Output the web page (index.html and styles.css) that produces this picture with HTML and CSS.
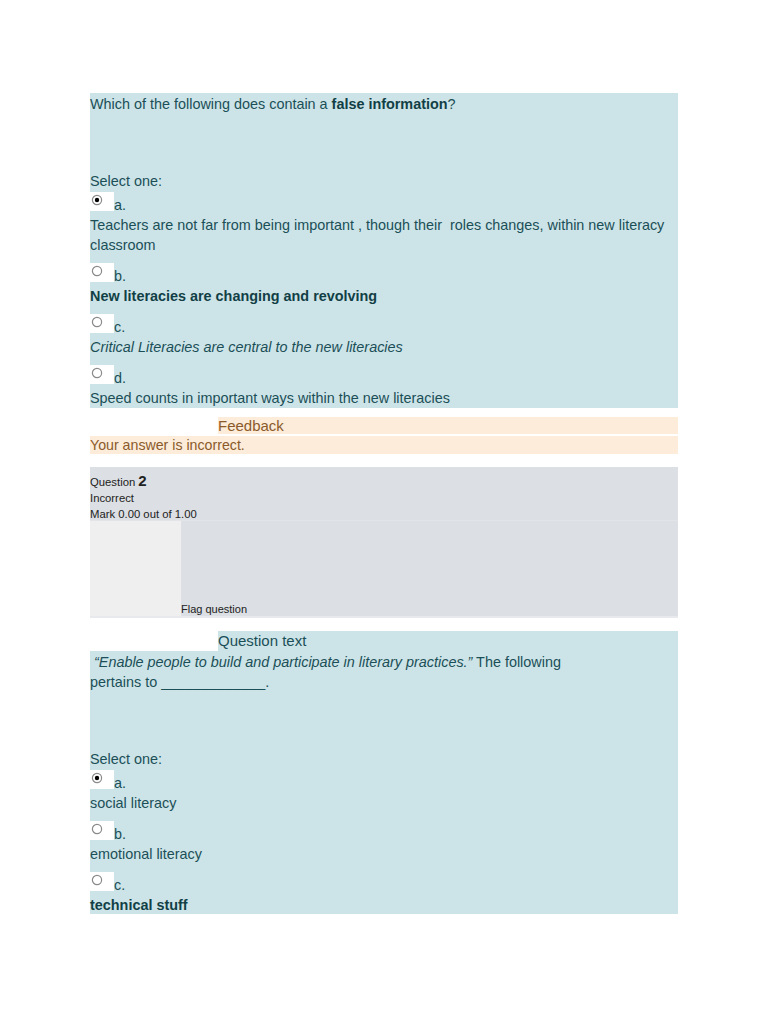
FILE: index.html
```html
<!DOCTYPE html>
<html>
<head>
<meta charset="utf-8">
<link rel="stylesheet" href="styles.css">
</head>
<body>
<div class="page">
  <section class="qbox">
    <div class="qtext">Which of the following does contain a <b>false information</b>?</div>
    <div class="select">Select one:</div>
    <div class="opt">
      <div class="radio-row"><span class="rb"><svg width="12" height="12" viewBox="0 0 12 12"><circle cx="6" cy="6" r="4.6" fill="#fff" stroke="#8a8a8a" stroke-width="1.2"/><circle cx="6" cy="6" r="2.2" fill="#000"/></svg></span><span class="lbl">a.</span></div>
      <div class="ans">Teachers are not far from being important , though their &nbsp;roles changes, within new literacy classroom</div>
    </div>
    <div class="opt">
      <div class="radio-row"><span class="rb"><svg width="12" height="12" viewBox="0 0 12 12"><circle cx="6" cy="6" r="4.6" fill="#fff" stroke="#8a8a8a" stroke-width="1.2"/></svg></span><span class="lbl">b.</span></div>
      <div class="ans bold">New literacies are changing and revolving</div>
    </div>
    <div class="opt">
      <div class="radio-row"><span class="rb"><svg width="12" height="12" viewBox="0 0 12 12"><circle cx="6" cy="6" r="4.6" fill="#fff" stroke="#8a8a8a" stroke-width="1.2"/></svg></span><span class="lbl">c.</span></div>
      <div class="ans ital">Critical Literacies are central to the new literacies</div>
    </div>
    <div class="opt">
      <div class="radio-row"><span class="rb"><svg width="12" height="12" viewBox="0 0 12 12"><circle cx="6" cy="6" r="4.6" fill="#fff" stroke="#8a8a8a" stroke-width="1.2"/></svg></span><span class="lbl">d.</span></div>
      <div class="ans">Speed counts in important ways within the new literacies</div>
    </div>
  </section>

  <div class="fb-head">Feedback</div>
  <div class="fb-text">Your answer is incorrect.</div>

  <section class="info">
    <div class="info-head">
      <div class="qnum">Question <b>2</b></div>
      <div class="line">Incorrect</div>
      <div class="line">Mark 0.00 out of 1.00</div>
    </div>
    <div class="info-body">
      <div class="flag-box"></div>
      <div class="flag-text">Flag question</div>
    </div>
  </section>

  <div class="qt-head">Question text</div>
  <section class="qbox2">
    <div class="qtext2">&nbsp;<i>“Enable people to build and participate in literary practices.”</i> The following<br>pertains to _____________.</div>
    <div class="select">Select one:</div>
    <div class="opt">
      <div class="radio-row"><span class="rb"><svg width="12" height="12" viewBox="0 0 12 12"><circle cx="6" cy="6" r="4.6" fill="#fff" stroke="#8a8a8a" stroke-width="1.2"/><circle cx="6" cy="6" r="2.2" fill="#000"/></svg></span><span class="lbl">a.</span></div>
      <div class="ans">social literacy</div>
    </div>
    <div class="opt">
      <div class="radio-row"><span class="rb"><svg width="12" height="12" viewBox="0 0 12 12"><circle cx="6" cy="6" r="4.6" fill="#fff" stroke="#8a8a8a" stroke-width="1.2"/></svg></span><span class="lbl">b.</span></div>
      <div class="ans">emotional literacy</div>
    </div>
    <div class="opt">
      <div class="radio-row"><span class="rb"><svg width="12" height="12" viewBox="0 0 12 12"><circle cx="6" cy="6" r="4.6" fill="#fff" stroke="#8a8a8a" stroke-width="1.2"/></svg></span><span class="lbl">c.</span></div>
      <div class="ans bold">technical stuff</div>
    </div>
  </section>
</div>
</body>
</html>
```

FILE: styles.css
```css
html, body {
  margin: 0;
  padding: 0;
  background: #ffffff;
}
body {
  font-family: "Liberation Sans", Arial, sans-serif;
  font-size: 14.4px;
  color: #1b4f57;
}
.page {
  width: 588px;
  margin-left: 90px;
  padding-top: 93px;
}
.qbox, .qbox2 {
  background: #cce4e8;
  line-height: 20px;
}
.qtext b { color: #123f46; }
.qtext {
  height: 78px;
  padding-top: 1px;
  box-sizing: border-box;
}
.qtext2 {
  height: 98px;
  padding-top: 1px;
  box-sizing: border-box;
}
.select {
  height: 20px;
  margin-bottom: 1px;
}
.opt {
  margin-bottom: 9px;
}
.opt:last-child {
  margin-bottom: 0;
}
.radio-row {
  height: 20px;
  display: flex;
  align-items: flex-end;
  margin-bottom: 2px;
}
.rb {
  display: flex;
  align-items: flex-start;
  justify-content: flex-start;
  width: 24px;
  height: 19px;
  align-self: flex-start;
  background: #ffffff;
  padding: 2px 0 0 1px;
  box-sizing: border-box;
}
.lbl {
  line-height: 14px;
}
.ans {
  padding-top: 1px;
  margin-bottom: -1px;
}
.ans.bold {
  font-weight: bold;
  color: #123f46;
}
.ans.ital {
  font-style: italic;
}
.fb-head {
  margin-top: 10px;
  margin-left: 128px;
  height: 17px;
  line-height: 17px;
  background: #fcecd9;
  color: #8b5a2b;
  font-size: 15px;
}
.fb-text {
  margin-top: 2px;
  height: 18px;
  line-height: 18px;
  background: #fcecd9;
  color: #8b5a2b;
  font-size: 14.2px;
}
.info {
  margin-top: 13px;
  background: #dcdfe3;
  color: #222;
  font-size: 11.3px;
}
.info-head {
  height: 54px;
  box-sizing: border-box;
  padding-top: 5px;
  border-bottom: 1px solid #e2e4e8;
}
.qnum {
  height: 18px;
  line-height: 18px;
}
.qnum b {
  font-size: 15px;
}
.line {
  height: 16px;
  line-height: 16px;
}
.info-body {
  height: 95px;
  display: flex;
  align-items: flex-end;
  border-bottom: 2px solid #e8e9ec;
}
.flag-box {
  width: 91px;
  align-self: stretch;
  background: #efefef;
}
.flag-text {
  line-height: 14px;
  font-size: 11px;
}
.qt-head {
  margin-top: 13px;
  margin-left: 128px;
  height: 20px;
  line-height: 20px;
  background: #cce4e8;
  color: #1b4f57;
  font-size: 15px;
}
```
